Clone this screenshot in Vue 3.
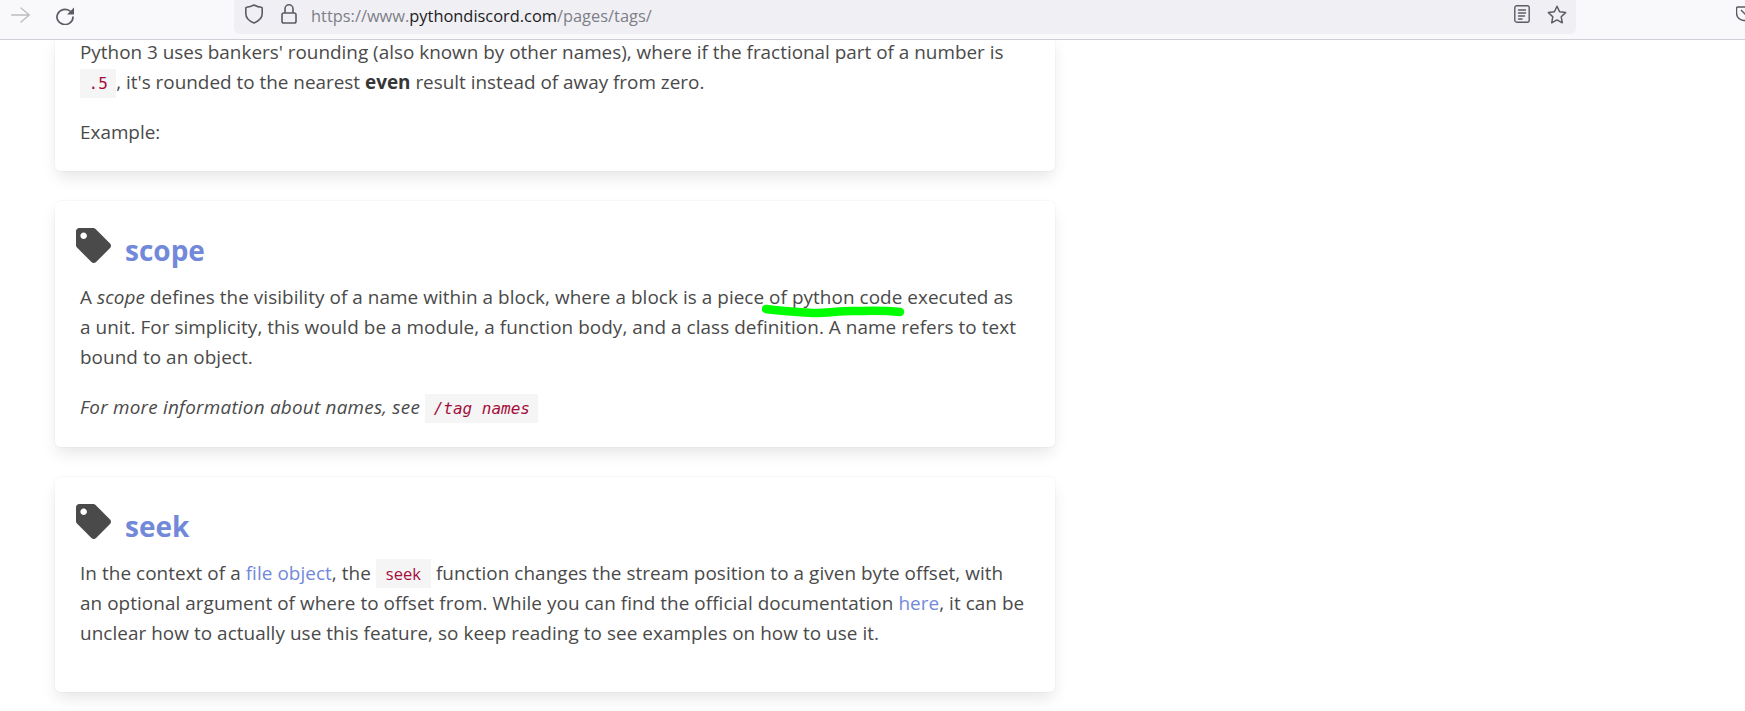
<script setup>
const tagPath = "M0 252.118V48C0 21.49 21.49 0 48 0h204.118a48 48 0 0 1 33.941 14.059l211.882 211.882c18.745 18.745 18.745 49.137 0 67.882L293.823 497.941c-18.745 18.745-49.137 18.745-67.882 0L14.059 286.059A48 48 0 0 1 0 252.118zM112 64c-26.51 0-48 21.49-48 48s21.49 48 48 48 48-21.49 48-48-21.49-48-48-48z";
</script>

<template>
  <div class="page">
    <header class="toolbar">
      <div class="nav">
        <svg class="back" width="19" height="16" viewBox="0 0 19 16" fill="none" stroke="#bcbcc0" stroke-width="1.3" stroke-linecap="round" stroke-linejoin="round"><path d="M.7 8h17.600M10 1l8.300 7-8.300 7"/></svg>
        <svg class="reload" width="19" height="18" viewBox="0 0 19 18" fill="none" stroke="#5b5b66" stroke-width="1.7" stroke-linecap="round" stroke-linejoin="round"><path d="M17 10a8 7.600 0 1 1-3.200-6.100"/><path d="M18 .5v7h-7z" fill="#5b5b66" stroke="none"/></svg>
      </div>
      <div class="urlbar">
        <svg class="shield" width="18" height="20" viewBox="0 0 18 20" fill="none" stroke="#5b5b66" stroke-width="1.6" stroke-linejoin="round"><path d="M9 1c2.500 1.300 5 2 7.400 2.200.5 0 .8.400.8.800v5.500c0 4.500-3.200 7.500-8.200 9.500C4 17 .8 14 .8 9.500V4c0-.4.300-.8.800-.8C4 3 6.500 2.300 9 1z"/></svg>
        <svg class="lock" width="16" height="20" viewBox="0 0 16 20" fill="none" stroke="#5b5b66" stroke-width="1.6"><rect x="1" y="9" width="14" height="10" rx="1.800"/><path d="M4 9V4.800a4 4 0 0 1 8 0V9"/></svg>
        <span class="url"><span class="dim">https://www.</span><span class="host">pythondiscord.com</span><span class="dim">/pages/tags/</span></span>
        <svg class="reader" width="16" height="18" viewBox="0 0 16 18" fill="none" stroke="#5b5b66" stroke-width="1.4" stroke-linecap="round"><rect x=".8" y=".8" width="14.400" height="16.400" rx="2"/><path d="M4.500 5h7M4.500 8h7M4.500 11h6M4.500 14h3.500"/></svg>
        <svg class="star" width="20" height="19" viewBox="0 0 20 19" fill="none" stroke="#5b5b66" stroke-width="1.5" stroke-linejoin="round"><path d="m10 1.300 2.600 5.500 6 .8-4.400 4.200 1.100 6L10 14.900 4.700 17.800l1.100-6L1.400 7.600l6-.8z"/></svg>
      </div>
      <svg class="pocket" width="16" height="16" viewBox="0 0 16 16" fill="none" stroke="#5b5b66" stroke-width="1.5" stroke-linejoin="round"><path d="M2 1h12a1.500 1.500 0 0 1 1.500 1.500V7a7.500 7.500 0 0 1-15 0V2.500A1.500 1.500 0 0 1 2 1z"/><path d="m5 4 6 6"/></svg>
    </header>

    <main class="list">
      <section class="card first">
        <p class="lead">Python 3 uses bankers' rounding (also known by other names), where if the fractional part of a number is <code class="mono">.5</code>, it's rounded to the nearest <strong>even</strong> result instead of away from zero.</p>
        <p>Example:</p>
      </section>

      <section class="card">
        <div class="head">
          <svg class="tag" viewBox="0 0 512 512"><path :d="tagPath"/></svg>
          <h2>scope</h2>
        </div>
        <p class="loose">A <em>scope</em> defines the visibility of a name within a block, where a block is a piece of python code executed as<br>a unit. For simplicity, this would be a module, a function body, and a class definition. A name refers to text<br>bound to an object.</p>
        <p><em class="wide">For more information about names, see <code class="mono">/tag names</code></em></p>
        <svg class="scribble" width="146" height="20" viewBox="0 0 146 20" fill="none" stroke="#00ff00" stroke-width="8.500" stroke-linecap="round" stroke-linejoin="round"><path d="M4 8c14 2 30 3 47 4 16 0 24-2 40-2 14 0 30-1 47 1"/></svg>
      </section>

      <section class="card last">
        <div class="head">
          <svg class="tag" viewBox="0 0 512 512"><path :d="tagPath"/></svg>
          <h2>seek</h2>
        </div>
        <p class="loose">In the context of a <a>file object</a>, the <code class="plain">seek</code> function changes the stream position to a given byte offset, with<br>an optional argument of where to offset from. While you can find the official documentation <a>here</a>, it can be<br>unclear how to actually use this feature, so keep reading to see examples on how to use it.</p>
      </section>
    </main>
  </div>
</template>

<style>
html, body { margin: 0; background: #fff; overflow: hidden; }
</style>

<style scoped>
.page {
  width: 1745px;
  height: 711px;
  overflow: hidden;
  background: #fff;
  font-family: "Open Sans", "Noto Sans", sans-serif;
  color: #4a4a4a;
}
.toolbar {
  position: relative;
  z-index: 2;
  box-sizing: border-box;
  height: 40px;
  display: flex;
  overflow: hidden;
  background: #f9f9fb;
  border-bottom: 1px solid #cfcfd8;
}
.nav {
  width: 234px;
  flex: none;
  display: flex;
  align-items: flex-start;
}
.back { margin: 7px 0 0 10.500px; }
.reload { margin: 6.500px 0 0 26px; }
.urlbar {
  box-sizing: border-box;
  width: 1342px;
  height: 34px;
  flex: none;
  display: flex;
  align-items: flex-start;
  background: #f0f0f4;
  border-radius: 0 0 6px 6px;
}
.shield { margin: 4px 0 0 11px; }
.lock { margin: 4px 0 0 18px; }
.url {
  margin-left: 14px;
  font-size: 16.4px;
  line-height: 32px;
  white-space: nowrap;
  flex: 1;
}
.dim { color: #7e7e88; }
.host { color: #1c1b22; }
.reader { margin: 5px 0 0 0; }
.star { margin: 5px 9px 0 17px; }
.pocket { margin: 6px 0 0 160px; flex: none; }

.list {
  margin-top: -4px;
  padding-left: 55px;
  display: flex;
  flex-direction: column;
  gap: 30px;
  width: 1000px;
}
.card {
  position: relative;
  box-sizing: border-box;
  background: #fff;
  border-radius: 6px;
  padding: 24px 24px 4px 25px;
  box-shadow: 0 8px 16px -2px rgba(10,10,10,.1), 0 0 0 1px rgba(10,10,10,.02);
}
.card.first {
  padding-top: 0;
  border-radius: 0 0 6px 6px;
}
.card.last { padding-bottom: 24px; }
.head {
  display: flex;
  align-items: flex-start;
  height: 57px;
}
.tag {
  width: 35px;
  height: 35px;
  margin: 2.500px 0 0 -4px;
  flex: none;
  fill: #4a4a4a;
}
h2 {
  margin: 7px 0 0 14px;
  font-size: 28px;
  line-height: 36px;
  font-weight: 700;
  color: #7289da;
}
p {
  margin: 0 0 20px;
  font-size: 18.9px;
  line-height: 30px;
}
p.lead { padding-top: 1px; margin-bottom: 19px; }
p.loose { letter-spacing: 0.06px; }
em.wide { letter-spacing: 0.23px; }
strong { font-weight: 700; color: #363636; }
a { color: #7289da; }
code {
  display: inline-block;
  background: #f5f5f5;
  color: #a50e3c;
  line-height: 29px;
  padding: 0 8.500px;
  vertical-align: baseline;
  letter-spacing: 0;
}
.mono { font-family: "DejaVu Sans Mono", "Liberation Mono", monospace; font-size: 16px; }
.plain { font-family: "Open Sans", sans-serif; font-size: 16.5px; padding: 0 10px; }
.scribble {
  position: absolute;
  left: 707px;
  top: 100px;
  z-index: 1;
}
</style>
